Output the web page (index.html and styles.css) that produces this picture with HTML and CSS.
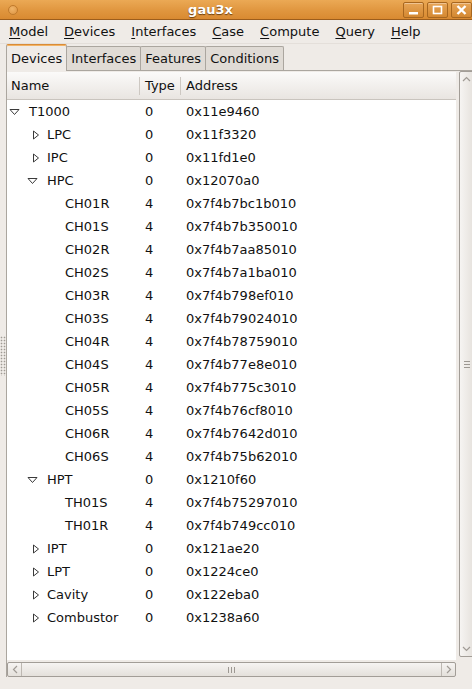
FILE: index.html
```html
<!DOCTYPE html>
<html lang="en">
<head>
  <meta charset="UTF-8">
  <title>gau3x</title>
  <link rel="stylesheet" href="styles.css">
</head>
<body>
  <div class="titlebar">
    <div class="win-icon"></div>
    <div class="win-title">gau3x</div>
    <div class="win-buttons">
      <div class="wbtn"><svg width="19" height="14" viewBox="0 0 19 14"><rect x="5" y="9" width="9" height="2.5" fill="#fff"/></svg></div>
      <div class="wbtn"><svg width="19" height="14" viewBox="0 0 19 14"><rect x="5.5" y="3.5" width="8" height="7" fill="none" stroke="#fff" stroke-width="1.6"/></svg></div>
      <div class="wbtn"><svg width="19" height="14" viewBox="0 0 19 14"><path d="M5.5 3 L13.5 11 M13.5 3 L5.5 11" stroke="#fff" stroke-width="2.4"/></svg></div>
    </div>
  </div>

  <div class="menubar">
    <span class="menu"><u>M</u>odel</span>
    <span class="menu"><u>D</u>evices</span>
    <span class="menu"><u>I</u>nterfaces</span>
    <span class="menu"><u>C</u>ase</span>
    <span class="menu"><u>C</u>ompute</span>
    <span class="menu"><u>Q</u>uery</span>
    <span class="menu"><u>H</u>elp</span>
  </div>

  <div class="client">
    <div class="grip-col"><div class="grip"></div></div>
    <div class="notebook">
      <div class="tabs">
        <div class="tab active">Devices</div>
        <div class="tab">Interfaces</div>
        <div class="tab">Features</div>
        <div class="tab">Conditions</div>
      </div>
      <div class="page">
        <div class="scrolled">
          <div class="tree">
            <div class="tree-head">
              <div class="hcell name">Name</div>
              <div class="hcell sep">Type</div>
              <div class="hcell sep">Address</div>
            </div>
            <div id="rows"></div>
          </div>
          <div class="vscroll">
            <div class="sbtn"><svg width="9" height="6" viewBox="0 0 9 6"><path d="M1 5 L4.5 1.5 L8 5" fill="none" stroke="#a09b95" stroke-width="1.2"/></svg></div>
            <div class="vthumb"><span class="grip-lines-v"></span></div>
            <div class="sbtn"><svg width="9" height="6" viewBox="0 0 9 6"><path d="M1 1 L4.5 4.5 L8 1" fill="none" stroke="#a09b95" stroke-width="1.2"/></svg></div>
          </div>
          <div class="hscroll">
            <div class="hbtn left"><svg width="6" height="9" viewBox="0 0 6 9"><path d="M5 1 L1.5 4.5 L5 8" fill="none" stroke="#a09b95" stroke-width="1.2"/></svg></div>
            <div class="hthumb"><span class="grip-lines-h"></span></div>
            <div class="hbtn right"><svg width="6" height="9" viewBox="0 0 6 9"><path d="M1 1 L4.5 4.5 L1 8" fill="none" stroke="#a09b95" stroke-width="1.2"/></svg></div>
          </div>
        </div>
      </div>
      <div class="statusbar"></div>
    </div>
  </div>

  <script>
    // [name, type, address, level, state] state: "open", "closed" or "" for leaves
    const devices = [
      ["T1000", 0, "0x11e9460", 0, "open"],
      ["LPC", 0, "0x11f3320", 1, "closed"],
      ["IPC", 0, "0x11fd1e0", 1, "closed"],
      ["HPC", 0, "0x12070a0", 1, "open"],
      ["CH01R", 4, "0x7f4b7bc1b010", 2, ""],
      ["CH01S", 4, "0x7f4b7b350010", 2, ""],
      ["CH02R", 4, "0x7f4b7aa85010", 2, ""],
      ["CH02S", 4, "0x7f4b7a1ba010", 2, ""],
      ["CH03R", 4, "0x7f4b798ef010", 2, ""],
      ["CH03S", 4, "0x7f4b79024010", 2, ""],
      ["CH04R", 4, "0x7f4b78759010", 2, ""],
      ["CH04S", 4, "0x7f4b77e8e010", 2, ""],
      ["CH05R", 4, "0x7f4b775c3010", 2, ""],
      ["CH05S", 4, "0x7f4b76cf8010", 2, ""],
      ["CH06R", 4, "0x7f4b7642d010", 2, ""],
      ["CH06S", 4, "0x7f4b75b62010", 2, ""],
      ["HPT", 0, "0x1210f60", 1, "open"],
      ["TH01S", 4, "0x7f4b75297010", 2, ""],
      ["TH01R", 4, "0x7f4b749cc010", 2, ""],
      ["IPT", 0, "0x121ae20", 1, "closed"],
      ["LPT", 0, "0x1224ce0", 1, "closed"],
      ["Cavity", 0, "0x122eba0", 1, "closed"],
      ["Combustor", 0, "0x1238a60", 1, "closed"]
    ];

    const arrows = {
      open: '<svg width="22" height="10" viewBox="0 0 22 10"><polygon points="3,2.5 12,2.5 7.5,7.5" fill="#fff" stroke="#3a3a3a" stroke-width="1"/></svg>',
      closed: '<svg width="22" height="10" viewBox="0 0 22 10"><polygon points="8.5,1 13.5,5 8.5,9" fill="#fff" stroke="#3a3a3a" stroke-width="1"/></svg>',
      "": ""
    };

    const rows = document.getElementById("rows");
    devices.forEach(([name, type, addr, level, state]) => {
      const row = document.createElement("div");
      row.className = "row";
      row.innerHTML =
        `<div class="cell name"><span class="indent i${level}"></span><span class="exp">${arrows[state]}</span><span>${name}</span></div>` +
        `<div class="cell type">${type}</div>` +
        `<div class="cell addr">${addr}</div>`;
      rows.appendChild(row);
    });
  </script>
</body>
</html>
```

FILE: styles.css
```css
body { margin: 0; width: 472px; height: 689px; overflow: hidden; background: #efebe7; font-family: "DejaVu Sans", sans-serif; font-size: 13px; color: #111; }

.titlebar { height: 19px; border-bottom: 1px solid #9c5d1c; background: linear-gradient(#eba955, #e0963f 55%, #d98a31); display: flex; align-items: center; }
.win-icon { width: 8px; height: 8px; margin-left: 8px; border-radius: 50%; border: 1px solid #c07a2c; background: radial-gradient(circle at 40% 35%, #f0b56a, #dd9340); }
.win-title { flex: 1; text-align: center; color: #fff; font-weight: bold; font-size: 13px; text-shadow: 0 1px 1px rgba(60, 30, 0, 0.7); }
.win-buttons { display: flex; gap: 3px; margin-right: 0; align-self: flex-start; margin-top: 2px; }
.wbtn { width: 19px; height: 14px; border: 1px solid #a8671f; border-radius: 2px; background: linear-gradient(#e7a557, #d48831); box-shadow: inset 0 1px 0 rgba(255, 255, 255, 0.35); display: flex; }

.menubar { height: 23px; display: flex; align-items: center; padding-left: 1px; border-bottom: 1px solid #e4dfda; }
.menu { padding: 0 8px; }
.menu u { text-decoration-thickness: 1px; text-underline-offset: 2px; }

.client { display: flex; height: 645px; }
.grip-col { width: 6px; flex: none; }
.grip { width: 6px; height: 40px; margin-top: 292px; background-image: radial-gradient(circle, #9f9a94 0.7px, transparent 1.1px); background-size: 3px 3px; }

.notebook { flex: 1; display: flex; flex-direction: column; }
.tabs { height: 26px; display: flex; align-items: flex-end; }
.tab { height: 23px; padding: 0 4px; margin-right: -1px; border: 1px solid #aba69f; border-bottom: none; border-radius: 2px 2px 0 0; background: #e0dbd5; display: flex; align-items: center; }
.tab.active { height: 26px; margin-bottom: -1px; position: relative; z-index: 1; background: #efebe7; border-top-color: #d98c38; box-shadow: inset 0 1px 0 #f2b366; }

.page { border-top: 1px solid #aba69f; border-left: 1px solid #aba69f; padding-top: 1px; }
.scrolled { display: grid; grid-template-columns: 449px 3px 15px; grid-template-rows: 588px 2px 15px; }

.tree { grid-column: 1; grid-row: 1; background: #fff; overflow: hidden; }
.tree-head { height: 27px; display: grid; grid-template-columns: 132px 41px 1fr; align-items: center; background: linear-gradient(#fbfaf9, #e9e5e1); border-bottom: 1px solid #c9c4be; }
.hcell { height: 18px; line-height: 18px; padding-left: 4px; }
.hcell.sep { border-left: 1px solid #cdc8c2; padding-left: 5px; }

.row { height: 23px; display: grid; grid-template-columns: 132px 41px 1fr; align-items: center; }
.cell.name { display: flex; align-items: center; }
.cell.type { padding-left: 6px; }
.cell.addr { padding-left: 6px; }
.indent.i0 { width: 0; }
.indent.i1 { width: 18px; }
.indent.i2 { width: 36px; }
.exp { width: 22px; height: 10px; flex: none; display: flex; }

.vscroll { grid-column: 3; grid-row: 1 / 3; height: 584px; margin-top: -1px; border: 1px solid #a29d97; border-radius: 2px; background: linear-gradient(to right, #f6f4f2, #e6e2dd); display: flex; flex-direction: column; }
.sbtn { height: 14px; display: flex; align-items: center; justify-content: center; }
.vthumb { flex: 1; display: flex; align-items: center; justify-content: center; }
.grip-lines-v { width: 6px; height: 5px; border-top: 1px solid #9d9892; border-bottom: 1px solid #9d9892; background: linear-gradient(#9d9892, #9d9892) center / 100% 1px no-repeat; }

.hscroll { grid-column: 1; grid-row: 3; border: 1px solid #a29d97; border-radius: 2px; background: linear-gradient(#f6f4f2, #e4e0db); display: flex; box-sizing: border-box; }
.hbtn { width: 13px; display: flex; align-items: center; justify-content: center; }
.hbtn.left { border-right: 1px solid #bdb8b2; }
.hbtn.right { border-left: 1px solid #bdb8b2; }
.hthumb { flex: 1; display: flex; align-items: center; justify-content: center; }
.grip-lines-h { width: 5px; height: 6px; border-left: 1px solid #9d9892; border-right: 1px solid #9d9892; background: linear-gradient(#9d9892, #9d9892) center / 1px 100% no-repeat; }

.statusbar { flex: 1; }
```
